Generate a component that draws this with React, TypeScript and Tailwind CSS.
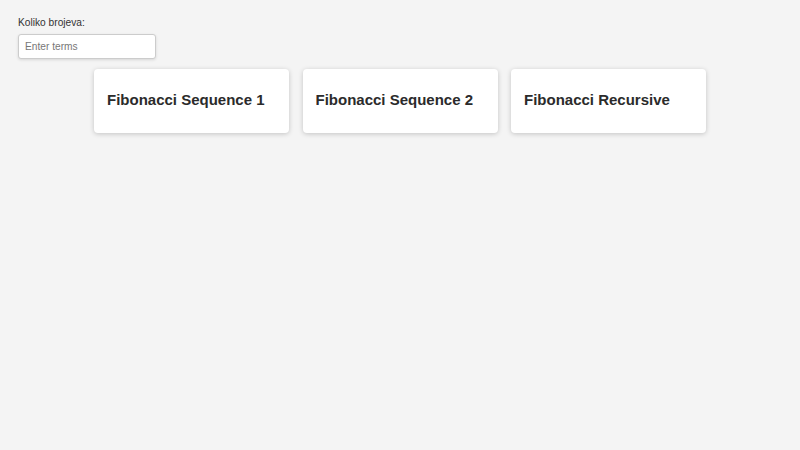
const cards = ["Fibonacci Sequence 1", "Fibonacci Sequence 2", "Fibonacci Recursive"];

export default function App() {
  return (
    <div className="min-h-screen bg-[#f4f4f4] px-[18px] pt-[16px] font-['Liberation_Sans',Arial,sans-serif] text-[#333]">
      <label className="block text-[10.2px] leading-[14px] text-[#333]">Koliko brojeva:</label>
      <input
        type="text"
        placeholder="Enter terms"
        className="mt-[4px] block h-[25px] w-[138px] rounded-[3px] border border-[#ccc] bg-white px-[6px] text-[10.2px] shadow-[0_1px_3px_rgba(0,0,0,0.12)] outline-none placeholder:text-[#777]"
      />
      <div className="mt-[10px] flex justify-center gap-[13.5px]">
        {cards.map((title) => (
          <div
            key={title}
            className="flex h-[64px] w-[195px] items-center rounded-[4px] bg-white px-[13px] pb-[2px] shadow-[0_1px_5px_rgba(0,0,0,0.2)]"
          >
            <h2 className="whitespace-nowrap text-[15px] font-bold text-[#2b2b2b]">{title}</h2>
          </div>
        ))}
      </div>
    </div>
  );
}
